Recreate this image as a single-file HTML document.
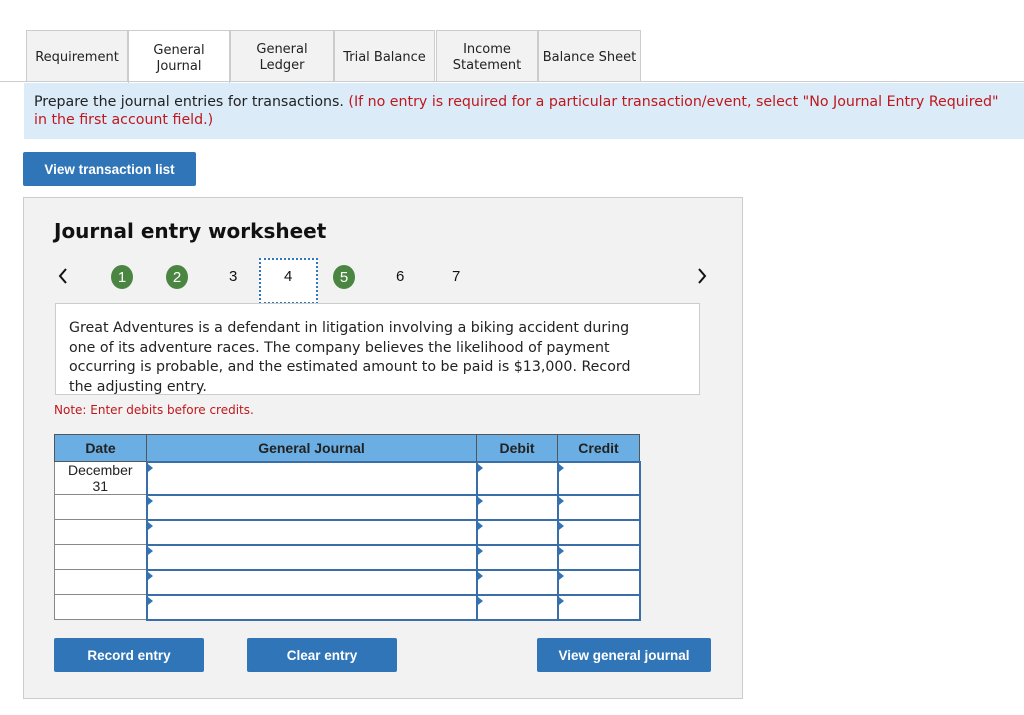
<!DOCTYPE html>
<html><head><meta charset="utf-8"><style>
*{box-sizing:border-box;margin:0;padding:0}
body{width:1024px;height:715px;background:#fff;position:relative;overflow:hidden;font-family:"DejaVu Sans","Liberation Sans",sans-serif;color:#222}
.a{position:absolute}
.tab{position:absolute;top:30px;height:51px;padding-top:3px;background:#f2f2f2;border:1px solid #ccc;border-bottom:none;display:flex;align-items:center;justify-content:center;text-align:center;font-size:13px;line-height:16px;color:#222}
.btn{position:absolute;background:#2f75b8;color:#fff;font-weight:bold;font-size:13.5px;display:flex;align-items:center;justify-content:center;border-radius:2px;font-family:"Liberation Sans",sans-serif}
.c{position:absolute;width:22px;height:24px;border-radius:50%;background:#4a8542;color:#fff;font-family:"Liberation Sans",sans-serif;font-size:15px;display:flex;align-items:center;justify-content:center}
.n{position:absolute;font-family:"Liberation Sans",sans-serif;font-size:15px;color:#111}
table{position:absolute;left:54px;top:434px;border-collapse:collapse;font-family:"Liberation Sans",sans-serif;font-size:14px}
td,th{padding:0}
th{background:#6aaee3;height:27px;border:1px solid #555;font-weight:bold;color:#222}
td.d{background:#fff;border:1.5px solid #888;text-align:center;line-height:16px;vertical-align:top}
td.i{background:#fff;border:2px solid #3a6ea8;position:relative}
td.i:before{content:"";position:absolute;left:0;top:1px;border-left:5px solid #2f75b8;border-top:4px solid transparent;border-bottom:4px solid transparent}
</style></head><body>
<div class="tab" style="left:26px;width:102px">Requirement</div>
<div class="tab" style="left:128px;width:102px;background:#fff;height:53px">General<br>Journal</div>
<div class="tab" style="left:230px;width:104px">General<br>Ledger</div>
<div class="tab" style="left:334px;width:101px">Trial Balance</div>
<div class="tab" style="left:436px;width:102px">Income<br>Statement</div>
<div class="tab" style="left:538px;width:103px">Balance Sheet</div>
<div class="a" style="left:0;top:81px;width:1024px;height:1px;background:#ccc"></div>
<div class="a" style="left:24px;top:83px;width:1000px;height:56px;background:#dbebf8;padding:11px 10px;font-size:14.2px;line-height:17.5px;color:#222;white-space:nowrap">Prepare the journal entries for transactions. <span style="color:#c0171c">(If no entry is required for a particular transaction/event, select "No Journal Entry Required"<br>in the first account field.)</span></div>
<div class="btn" style="left:23px;top:152px;width:173px;height:34px">View transaction list</div>
<div class="a" style="left:23px;top:197px;width:720px;height:502px;background:#f2f2f2;border:1px solid #ccc"></div>
<div class="a" style="left:54px;top:219px;font-size:20px;font-weight:bold;color:#111">Journal entry worksheet</div>
<svg class="a" style="left:57px;top:268px" width="12" height="16"><path d="M9 1 L3 8 L9 15" fill="none" stroke="#111" stroke-width="2"/></svg>
<svg class="a" style="left:696px;top:268px" width="12" height="16"><path d="M3 1 L9 8 L3 15" fill="none" stroke="#111" stroke-width="2"/></svg>
<div class="c" style="left:111px;top:265px">1</div>
<div class="c" style="left:166px;top:265px">2</div>
<div class="n" style="left:229px;top:268px">3</div>
<div class="a" style="left:259px;top:258px;width:59px;height:46px;background:#fff;border:2px dotted #2f75b8"></div>
<div class="n" style="left:284px;top:268px">4</div>
<div class="c" style="left:333px;top:265px">5</div>
<div class="n" style="left:396px;top:268px">6</div>
<div class="n" style="left:452px;top:268px">7</div>
<div class="a" style="left:55px;top:303px;width:645px;height:92px;background:#fff;border:1px solid #ccc;padding:15px 13px;font-size:14.2px;line-height:19.5px;color:#222;white-space:nowrap">Great Adventures is a defendant in litigation involving a biking accident during<br>one of its adventure races. The company believes the likelihood of payment<br>occurring is probable, and the estimated amount to be paid is $13,000. Record<br>the adjusting entry.</div>
<div class="a" style="left:54px;top:403px;font-size:12px;color:#c0171c">Note: Enter debits before credits.</div>
<table>
<tr><th style="width:92px">Date</th><th style="width:330px">General Journal</th><th style="width:81px">Debit</th><th style="width:82px">Credit</th></tr>
<tr style="height:33px"><td class="d">December<br>31</td><td class="i"></td><td class="i"></td><td class="i"></td></tr>
<tr style="height:25px"><td class="d"></td><td class="i"></td><td class="i"></td><td class="i"></td></tr>
<tr style="height:25px"><td class="d"></td><td class="i"></td><td class="i"></td><td class="i"></td></tr>
<tr style="height:25px"><td class="d"></td><td class="i"></td><td class="i"></td><td class="i"></td></tr>
<tr style="height:25px"><td class="d"></td><td class="i"></td><td class="i"></td><td class="i"></td></tr>
<tr style="height:25px"><td class="d"></td><td class="i"></td><td class="i"></td><td class="i"></td></tr>
</table>
<div class="btn" style="left:54px;top:638px;width:150px;height:34px">Record entry</div>
<div class="btn" style="left:247px;top:638px;width:150px;height:34px">Clear entry</div>
<div class="btn" style="left:537px;top:638px;width:174px;height:34px">View general journal</div>
</body></html>
